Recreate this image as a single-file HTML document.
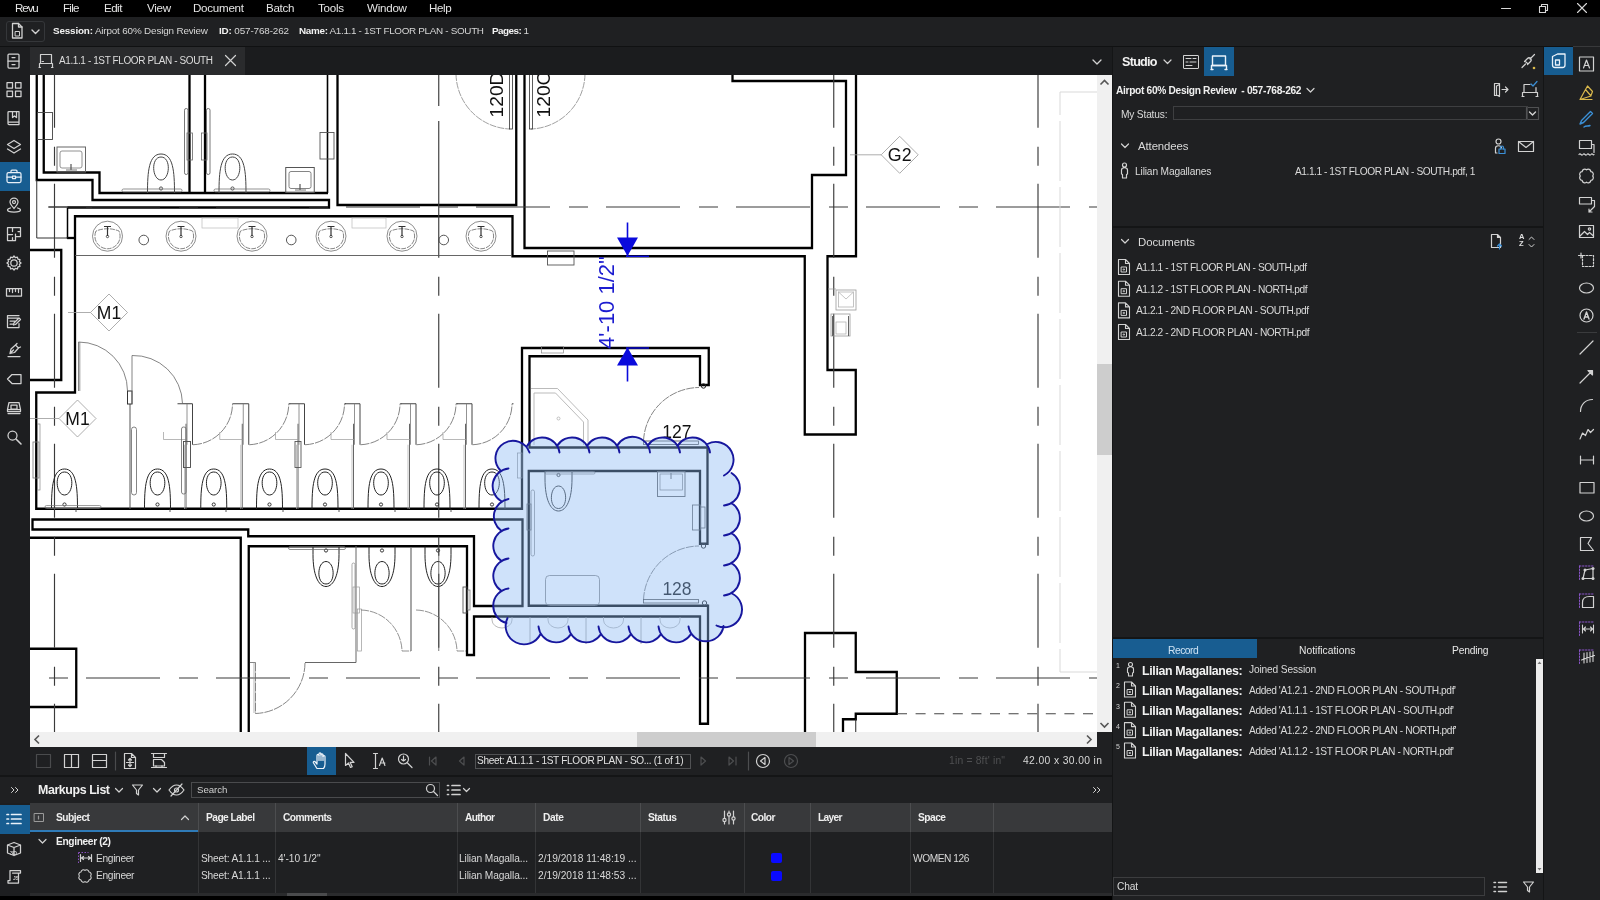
<!DOCTYPE html>
<html lang="en"><head><meta charset="utf-8"><title>Revu - A1.1.1 - 1ST FLOOR PLAN - SOUTH</title>
<style>
*{box-sizing:border-box;margin:0;padding:0}
html,body{width:1600px;height:900px;overflow:hidden;background:#1f2022;font-family:"Liberation Sans",sans-serif;color:#dcdcdc}
.a{position:absolute}
.t{will-change:transform;position:absolute;white-space:nowrap;line-height:1}
b{font-weight:bold;color:#f2f2f2}
#menubar{left:0;top:0;width:1600px;height:17px;background:#000}
#menubar .t{top:2px;font-size:11.6px;color:#e4e4e4}
#sessbar{left:0;top:17px;width:1600px;height:30px;background:#1f2022;border-bottom:1px solid #101112}
#sessbar .t{top:9px;font-size:9.9px;color:#d6d6d6}
#tabbar{left:0;top:47px;width:1112px;height:28px;background:#1b1c1e}
#tab{left:30px;top:0;width:215px;height:28px;background:#2a2b2d}
#sidebar{left:0;top:47px;width:30px;height:853px;background:#1d1e20}
#canvas{left:30px;top:75px;width:1067px;height:657px;background:#fff;overflow:hidden}
#vscroll{left:1097px;top:75px;width:15px;height:657px;background:#f0f0f0}
#hscroll{left:30px;top:732px;width:1067px;height:15px;background:#f0f0f0}
#btool{left:30px;top:747px;width:1082px;height:28px;background:#1f2022}
#mlhead{left:0;top:776px;width:1112px;height:27px;background:#1f2022}
#thead{left:30px;top:803px;width:1082px;height:29px;background:#38393b}
#thead .t{top:10px;font-size:10.2px;font-weight:bold;color:#eee}
#tbody{left:30px;top:832px;width:1082px;height:62px;background:#1f2022}
#tbody .t{font-size:10.2px;color:#d8d8d8}
#rpanel{left:1112px;top:47px;width:431px;height:853px;background:#1f2022;border-left:1px solid #141516}
#rtool{left:1543px;top:47px;width:57px;height:853px;background:#1f2022;border-left:1px solid #141516}
#rpanel .t{font-size:10.2px;color:#dadada}
svg{position:absolute;overflow:visible}
#canvas svg{will-change:transform}
.ic{stroke:#d2d2d2;fill:none;stroke-width:1.3;stroke-linecap:round;stroke-linejoin:round}
.rn{left:28.500px;font-size:12.400px!important;font-weight:bold;color:#f2f2f2!important}.rm{left:136px}
</style></head><body>
<!-- MENU BAR -->
<div id="menubar" class="a">
<span class="t" style="left:15px;letter-spacing:-1.093px">Revu</span><span class="t" style="left:63px;letter-spacing:-0.763px">File</span><span class="t" style="left:104px;letter-spacing:-0.528px">Edit</span><span class="t" style="left:147px;letter-spacing:-0.307px">View</span><span class="t" style="left:193px;letter-spacing:-0.263px">Document</span><span class="t" style="left:266px;letter-spacing:-0.314px">Batch</span><span class="t" style="left:318px;letter-spacing:-0.270px">Tools</span><span class="t" style="left:367px;letter-spacing:-0.250px">Window</span><span class="t" style="left:429px;letter-spacing:-0.420px">Help</span>
<svg style="left:1495px;top:0" width="105" height="17"><g class="ic" style="stroke:#d8d8d8;stroke-width:1.1"><path d="M6.5 8.5H15.5"/><path d="M44.5 6.5h6v6h-6z M46.5 6.5v-2h6v6h-2"/><path d="M82.5 3.5l9 9M91.5 3.5l-9 9"/></g></svg>
</div>
<!-- SESSION BAR -->
<div id="sessbar" class="a">
<div class="a" style="left:6px;top:4px;width:39px;height:21px;border:1px solid #35373a;border-radius:3px"></div>
<svg style="left:10px;top:5px" width="32" height="20"><g class="ic"><path d="M2.5 1.5h6l3.5 3.5v11h-9.5z"/><path d="M8.500 1.5v3.5h3.5"/><rect x="5.5" y="9.500" width="4" height="4.5" style="stroke-width:1"/><path d="M22 8l3.5 3.5L29 8" style="stroke-width:1.4"/></g></svg>
<span class="t" style="left:53px;letter-spacing:-0.165px"><b>Session:</b> Airpot 60% Design Review</span>
<span class="t" style="left:219.400px;letter-spacing:-0.137px"><b>ID:</b> 057-768-262</span>
<span class="t" style="left:298.600px;letter-spacing:-0.314px"><b>Name:</b> A1.1.1 - 1ST FLOOR PLAN - SOUTH</span>
<span class="t" style="left:492px;letter-spacing:-0.520px"><b>Pages:</b> 1</span>
</div>
<!-- TAB BAR -->
<div id="tabbar" class="a">
<div id="tab" class="a">
<svg style="left:8px;top:6px" width="16" height="16"><g class="ic" style="stroke-width:1.2"><path d="M2.5 1.5h11v9h-11z"/><path d="M1.5 14.500v-4h13v4M1 14.5h1.500M13.500 14.5h1.5"/><path d="M4 8.5h1.500" style="stroke-width:1"/></g></svg>
<span class="t" style="left:29px;top:9px;font-size:10px;color:#dcdcdc;letter-spacing:-0.399px">A1.1.1 - 1ST FLOOR PLAN - SOUTH</span>
<svg style="left:194px;top:7px" width="13" height="13"><path class="ic" d="M1.5 1.500l10 10M11.5 1.500l-10 10" style="stroke-width:1.2"/></svg>
</div>
<svg style="left:1091px;top:10px" width="12" height="10"><path class="ic" d="M2 3l4 4l4-4"/></svg>
</div>
<!-- LEFT SIDEBAR -->
<div id="sidebar" class="a">
<div class="a" style="left:0;top:115px;width:30px;height:29px;background:#175d91"></div>
<div class="a" style="left:0;top:758px;width:30px;height:29px;background:#175d91"></div>
<svg style="left:-.700px;top:0" width="30" height="853"><g class="ic" style="stroke-width:1.25">
<!-- file cabinet y=61 -->
<g transform="translate(7,6)"><rect x="2" y="1" width="11" height="14" rx="1"/><path d="M2 8h11M6 4.500h3M6 11.500h3"/></g>
<!-- grid y=89 -->
<g transform="translate(7,34)"><rect x="1" y="1.500" width="5.500" height="5.500"/><rect x="9.500" y="1.500" width="5.500" height="5.500"/><rect x="1" y="10" width="5.500" height="5.500"/><rect x="9.500" y="10" width="5.500" height="5.500"/></g>
<!-- bookmark y=118 -->
<g transform="translate(7,63)"><path d="M3 1.500h10v13h-10a1 1 0 0 1-1-1v-11a1 1 0 0 1 1-1zM2 12h11M6.500 1.500v6l2-1.500l2 1.500v-6"/></g>
<!-- layers y=147 -->
<g transform="translate(7,92)"><path d="M8 1.500l6.500 4l-6.500 4l-6.500-4zM1.500 10l6.500 4l6.500-4"/></g>
<!-- toolbox y=176 -->
<g transform="translate(7,121)" style="stroke:#e8f0f8"><rect x="1" y="4.500" width="14" height="10" rx="1.500"/><path d="M5 4.500v-1.500a1 1 0 0 1 1-1h4a1 1 0 0 1 1 1v1.500M1 9h5.500M9.500 9h5.500M6.500 8h3v2.500h-3z"/></g>
<!-- pin y=205 -->
<g transform="translate(7,150)"><path d="M8 11.500c-2.500-3-4-4.500-4-6.500a4 4 0 0 1 8 0c0 2-1.500 3.500-4 6.500z"/><circle cx="8" cy="5" r="1.500"/><path d="M4.500 11c-2 .5-3 1.200-3 2c0 1.200 3 2 6.500 2s6.500-.8 6.500-2c0-.8-1-1.500-3-2"/></g>
<!-- floor plan y=234 -->
<g transform="translate(7,179)"><path d="M1.500 1.500h13v9h-5v4h-8zM6.500 1.500v4M1.500 8.500h5M9.500 10.500v-2.500M12 5.500h2.500M6.500 14.500v-3"/></g>
<!-- gear y=263 -->
<g transform="translate(7,208)"><circle cx="8" cy="8" r="3.200"/><path d="M8 1l1.300 1.700l2.100-.6l.5 2.100l2.100.5l-.6 2.100l1.700 1.200l-1.700 1.300l.6 2.100l-2.100.5l-.5 2.100l-2.100-.6l-1.300 1.700l-1.300-1.700l-2.100.6l-.5-2.100l-2.100-.5l.6-2.100l-1.700-1.300l1.700-1.200l-.6-2.100l2.100-.5l.5-2.100l2.100.6z"/></g>
<!-- ruler y=292 -->
<g transform="translate(7,237)"><rect x=".500" y="4.500" width="15" height="7.500"/><path d="M3.500 4.500v3M6.500 4.500v4M9.500 4.500v3M12.500 4.500v4"/></g>
<!-- form/edit y=321 -->
<g transform="translate(7,266)"><path d="M13 2.500h-11.500v12h11.500v-4M1.500 5h11.500M4 8h5M4 11h3M14.500 6.500l-5 5l-2 .5l.5-2l5-5z"/></g>
<!-- pen sign y=350 -->
<g transform="translate(7,295)"><path d="M2 14.500h12M4 11.500l1-4.500l4.500-4l3 3l-4 4.500zM9.500 3l1.500-1.500M12.500 6l2-1M4 11.500l3.500-3.500"/></g>
<!-- tag y=379 -->
<g transform="translate(7,324)"><path d="M1.500 8l4.500-4.500h9v9h-9z"/></g>
<!-- scanner y=408 -->
<g transform="translate(7,353)"><path d="M3 2.500h10l1.500 7h-13zM1.500 9.500h13v2h-13zM2 13.500h12M5 5h6v4h-6z" /></g>
<!-- search y=437 -->
<g transform="translate(7,382)"><circle cx="6.500" cy="6.500" r="4.500"/><path d="M10 10l5 5" style="stroke-width:1.6"/></g>
<!-- >> y=790 -->
<g transform="translate(7,735)" style="stroke-width:1"><path d="M4.500 5.500l2.500 2.500l-2.500 2.500M8.500 5.500l2.500 2.500l-2.500 2.500"/></g>
<!-- list y=819 -->
<g transform="translate(7,764)" style="stroke:#eaf2fa;stroke-width:1.7"><path d="M5.500 3.500h9.500M5.500 8h9.500M5.500 12.500h9.500M1 3.500h1.500M1 8h1.500M1 12.500h1.500"/></g>
<!-- 3d y=849 -->
<g transform="translate(7,794)"><path d="M8 1.500l6.500 2.500v8l-6.500 2.500l-6.500-2.500v-8zM1.500 4l6.500 2.500l6.500-2.500M8 6.500v8"/></g>
<!-- js scroll y=877 -->
<g transform="translate(7,822)"><path d="M4 1.500h10.500v2.500h-2v10h-10.500v-2.500h2zM12.500 4h-6"/></g>
</g></svg>
<span class="t" style="left:10px;top:803.500px;font-size:5.5px;font-weight:bold;color:#cfcfcf">3D</span>
<span class="t" style="left:12.500px;top:829px;font-size:5px;font-weight:bold;color:#cfcfcf">JS</span>
</div>
<!-- CANVAS -->
<div id="canvas" class="a"><svg style="left:-30px;top:-75px" width="1600" height="900" viewBox="0 0 1600 900" font-family="Liberation Sans, sans-serif">
<path d="M43.75 70 L43.75 172.5 L99.5 172.5 L99.5 193 L328 193" fill="none" stroke="#000" stroke-width="2.3" stroke-linejoin="miter" />
<line x1="189.5" y1="70" x2="189.5" y2="193" stroke="#000" stroke-width="2.3" />
<line x1="205" y1="70" x2="205" y2="193" stroke="#000" stroke-width="2.3" />
<line x1="327.5" y1="70" x2="327.5" y2="193" stroke="#000" stroke-width="1.6" />
<path d="M36.75 70 L36.75 180 L92.5 180 L92.5 200 L329 200 L329 207.5 L67.5 207.5" fill="none" stroke="#000" stroke-width="2.3" stroke-linejoin="miter" />
<line x1="67.5" y1="207.5" x2="67.5" y2="238" stroke="#000" stroke-width="1.5" />
<line x1="66.8" y1="238" x2="75" y2="238" stroke="#000" stroke-width="2.3" />
<path d="M337.5 70 L337.5 205 L516.25 205 L516.25 70" fill="none" stroke="#000" stroke-width="2.3" stroke-linejoin="miter" />
<path d="M524.5 70 L524.5 248 L812 248 L812 175 L846 175 L846 81 L732.5 81 L732.5 70" fill="none" stroke="#000" stroke-width="2.3" stroke-linejoin="miter" />
<path d="M522 508.75 L36.25 508.75 L36.25 392.5 L75 392.5 L75 216.25 L512.5 216.25 L512.5 256.25 L804.75 256.25 L804.75 434.5 L855.75 434.5 L855.75 370 L827.5 370 L827.5 256.25 L856 256.25 L856 70" fill="none" stroke="#000" stroke-width="2.3" stroke-linejoin="miter" />
<path d="M522 509.9 L522 348 L708.75 348 L708.75 385 L700 385 L700 356.25 L529.5 356.25 L529.5 447.5 L707.5 447.5 L707.5 543.75 L700 543.75 L700 471 L528.75 471 L528.75 605.75 L708 605.75" fill="none" stroke="#000" stroke-width="2.3" stroke-linejoin="miter" />
<path d="M32.5 519.5 L522.5 519.5 L522.5 606 L474 606 L474 536.25 L248.25 536.25 L248.25 529.5 L32.5 529.5 Z" fill="none" stroke="#000" stroke-width="2.3" stroke-linejoin="miter" />
<path d="M28 537.75 L240.75 537.75 L240.75 735" fill="none" stroke="#000" stroke-width="2.3" stroke-linejoin="miter" />
<path d="M248.75 735 L248.75 546.25 L467 546.25 L467 655 L474 655 L474 616.5 L700 616.5 L700 723.75 L708 723.75 L708 604.6" fill="none" stroke="#000" stroke-width="2.3" stroke-linejoin="miter" />
<path d="M28 648.75 L76.25 648.75 L76.25 707 L28 707" fill="none" stroke="#000" stroke-width="2.3" stroke-linejoin="miter" />
<path d="M28 380 L61.25 380 L61.25 250 L28 250" fill="none" stroke="#000" stroke-width="2.3" stroke-linejoin="miter" />
<path d="M805 735 L805 633 L855.75 633 L855.75 672 L896.75 672 L896.75 713.75 L855.75 713.75 L855.75 719.25 L843 719.25 L843 735" fill="none" stroke="#000" stroke-width="2.3" stroke-linejoin="miter" />
<line x1="855.75" y1="719" x2="855.75" y2="735" stroke="#222" stroke-width="1" />
<path d="M36.75 180 L36.75 238 L67.5 238" fill="none" stroke="#333" stroke-width="1" stroke-linejoin="miter" />
<line x1="48" y1="207" x2="92" y2="207" stroke="#333" stroke-width="1" />
<line x1="-44" y1="207" x2="1097" y2="207" stroke="#3a3a3a" stroke-width="1.15" stroke-dasharray="74 19 19 18"/>
<line x1="-44" y1="678" x2="1097" y2="678" stroke="#3a3a3a" stroke-width="1.15" stroke-dasharray="74 19 19 18"/>
<line x1="54.5" y1="-76.25" x2="54.5" y2="735" stroke="#3a3a3a" stroke-width="1.15" stroke-dasharray="74 19 19 18"/>
<line x1="833.75" y1="-76.25" x2="833.75" y2="735" stroke="#3a3a3a" stroke-width="1.15" stroke-dasharray="74 19 19 18"/>
<line x1="1038" y1="-76.25" x2="1038" y2="735" stroke="#3a3a3a" stroke-width="1.15" stroke-dasharray="74 19 19 18"/>
<line x1="438.75" y1="70" x2="438.75" y2="106" stroke="#3a3a3a" stroke-width="1.15" />
<line x1="438.75" y1="121" x2="438.75" y2="257.75" stroke="#3a3a3a" stroke-width="1.15" />
<line x1="438.75" y1="276.75" x2="438.75" y2="735" stroke="#3a3a3a" stroke-width="1.15" stroke-dasharray="19 18 74 19"/>
<line x1="897" y1="713.75" x2="1097" y2="713.75" stroke="#444" stroke-width="1" stroke-dasharray="10 8.6"/>
<path d="M1097 92 L1060 92 L1060 672 L1097 672" fill="none" stroke="#d9d9d9" stroke-width="1" stroke-linejoin="miter" stroke-dasharray="60 6"/>
<path d="M881.2 154.8 L899.7 136.3 L918.2 154.8 L899.7 173.3 Z" fill="#fff" stroke="#999" stroke-width="0.8"/>
<line x1="850" y1="154.8" x2="881.2" y2="154.8" stroke="#999" stroke-width="0.8" />
<text x="899.7" y="161.10000000000002" text-anchor="middle" font-size="17.8" fill="#111">G2</text>
<path d="M90.5 312.5 L109 294.0 L127.5 312.5 L109 331.0 Z" fill="#fff" stroke="#999" stroke-width="0.8"/>
<line x1="68" y1="312.5" x2="90.5" y2="312.5" stroke="#999" stroke-width="0.8" />
<text x="109" y="318.8" text-anchor="middle" font-size="17.5" fill="#111">M1</text>
<path d="M59.0 418.5 L77.5 400.0 L96.0 418.5 L77.5 437.0 Z" fill="#fff" stroke="#999" stroke-width="0.8"/>
<line x1="30" y1="418.5" x2="59" y2="418.5" stroke="#999" stroke-width="0.8" />
<text x="77.5" y="424.8" text-anchor="middle" font-size="17.5" fill="#111">M1</text>
<circle cx="107.5" cy="236.2" r="15" fill="none" stroke="#707070" stroke-width="0.8"/>
<path d="M96.0 231 A12.6 12.6 0 1 0 119.0 231 Q107.5 226.5 96.0 231Z" fill="none" stroke="#666" stroke-width="0.8" stroke-dasharray="5 1"/>
<line x1="107.5" y1="226" x2="107.5" y2="236" stroke="#333" stroke-width="1.2" />
<line x1="104" y1="226.5" x2="111" y2="226.5" stroke="#333" stroke-width="1" />
<circle cx="107.5" cy="236.5" r="1.2" fill="none" stroke="#333" stroke-width="0.8"/>
<circle cx="181" cy="236.2" r="15" fill="none" stroke="#707070" stroke-width="0.8"/>
<path d="M169.5 231 A12.6 12.6 0 1 0 192.5 231 Q181 226.5 169.5 231Z" fill="none" stroke="#666" stroke-width="0.8" stroke-dasharray="5 1"/>
<line x1="181" y1="226" x2="181" y2="236" stroke="#333" stroke-width="1.2" />
<line x1="177.5" y1="226.5" x2="184.5" y2="226.5" stroke="#333" stroke-width="1" />
<circle cx="181" cy="236.5" r="1.2" fill="none" stroke="#333" stroke-width="0.8"/>
<circle cx="252" cy="236.2" r="15" fill="none" stroke="#707070" stroke-width="0.8"/>
<path d="M240.5 231 A12.6 12.6 0 1 0 263.5 231 Q252 226.5 240.5 231Z" fill="none" stroke="#666" stroke-width="0.8" stroke-dasharray="5 1"/>
<line x1="252" y1="226" x2="252" y2="236" stroke="#333" stroke-width="1.2" />
<line x1="248.5" y1="226.5" x2="255.5" y2="226.5" stroke="#333" stroke-width="1" />
<circle cx="252" cy="236.5" r="1.2" fill="none" stroke="#333" stroke-width="0.8"/>
<circle cx="331" cy="236.2" r="15" fill="none" stroke="#707070" stroke-width="0.8"/>
<path d="M319.5 231 A12.6 12.6 0 1 0 342.5 231 Q331 226.5 319.5 231Z" fill="none" stroke="#666" stroke-width="0.8" stroke-dasharray="5 1"/>
<line x1="331" y1="226" x2="331" y2="236" stroke="#333" stroke-width="1.2" />
<line x1="327.5" y1="226.5" x2="334.5" y2="226.5" stroke="#333" stroke-width="1" />
<circle cx="331" cy="236.5" r="1.2" fill="none" stroke="#333" stroke-width="0.8"/>
<circle cx="402" cy="236.2" r="15" fill="none" stroke="#707070" stroke-width="0.8"/>
<path d="M390.5 231 A12.6 12.6 0 1 0 413.5 231 Q402 226.5 390.5 231Z" fill="none" stroke="#666" stroke-width="0.8" stroke-dasharray="5 1"/>
<line x1="402" y1="226" x2="402" y2="236" stroke="#333" stroke-width="1.2" />
<line x1="398.5" y1="226.5" x2="405.5" y2="226.5" stroke="#333" stroke-width="1" />
<circle cx="402" cy="236.5" r="1.2" fill="none" stroke="#333" stroke-width="0.8"/>
<circle cx="481" cy="236.2" r="15" fill="none" stroke="#707070" stroke-width="0.8"/>
<path d="M469.5 231 A12.6 12.6 0 1 0 492.5 231 Q481 226.5 469.5 231Z" fill="none" stroke="#666" stroke-width="0.8" stroke-dasharray="5 1"/>
<line x1="481" y1="226" x2="481" y2="236" stroke="#333" stroke-width="1.2" />
<line x1="477.5" y1="226.5" x2="484.5" y2="226.5" stroke="#333" stroke-width="1" />
<circle cx="481" cy="236.5" r="1.2" fill="none" stroke="#333" stroke-width="0.8"/>
<circle cx="143.75" cy="240" r="4.8" fill="none" stroke="#444" stroke-width="0.9"/>
<circle cx="291.25" cy="240" r="4.8" fill="none" stroke="#444" stroke-width="0.9"/>
<circle cx="443.75" cy="240" r="4.8" fill="none" stroke="#444" stroke-width="0.9"/>
<line x1="75" y1="255.5" x2="512" y2="255.5" stroke="#555" stroke-width="0.9" />
<rect x="202" y="218" width="36" height="10" rx="0" fill="none" stroke="#bbb" stroke-width="0.7"/>
<rect x="352" y="218" width="34" height="10" rx="0" fill="none" stroke="#bbb" stroke-width="0.7"/>
<rect x="547.5" y="251" width="26.5" height="14" rx="0" fill="none" stroke="#555" stroke-width="0.9"/>
<path d="M51.5 509 C51.5 487.0 52.8 469 64.5 469 C76.2 469 77.5 487.0 77.5 509" fill="none" stroke="#222" stroke-width="1"/>
<path d="M64.5 472 C75.0 472 73.5 495 64.5 495 C55.5 495 54.0 472 64.5 472 Z" fill="none" stroke="#222" stroke-width="1"/>
<circle cx="64.5" cy="504.5" r="1.6" fill="none" stroke="#222" stroke-width="0.9"/>
<path d="M144.5 509 C144.5 487.0 145.8 469 157.5 469 C169.2 469 170.5 487.0 170.5 509" fill="none" stroke="#222" stroke-width="1"/>
<path d="M157.5 472 C168.0 472 166.5 495 157.5 495 C148.5 495 147.0 472 157.5 472 Z" fill="none" stroke="#222" stroke-width="1"/>
<circle cx="157.5" cy="504.5" r="1.6" fill="none" stroke="#222" stroke-width="0.9"/>
<path d="M200.75 509 C200.75 487.0 202.05 469 213.75 469 C225.45 469 226.75 487.0 226.75 509" fill="none" stroke="#222" stroke-width="1"/>
<path d="M213.75 472 C224.25 472 222.75 495 213.75 495 C204.75 495 203.25 472 213.75 472 Z" fill="none" stroke="#222" stroke-width="1"/>
<circle cx="213.75" cy="504.5" r="1.6" fill="none" stroke="#222" stroke-width="0.9"/>
<path d="M256.5 509 C256.5 487.0 257.8 469 269.5 469 C281.2 469 282.5 487.0 282.5 509" fill="none" stroke="#222" stroke-width="1"/>
<path d="M269.5 472 C280.0 472 278.5 495 269.5 495 C260.5 495 259.0 472 269.5 472 Z" fill="none" stroke="#222" stroke-width="1"/>
<circle cx="269.5" cy="504.5" r="1.6" fill="none" stroke="#222" stroke-width="0.9"/>
<path d="M312.0 509 C312.0 487.0 313.3 469 325 469 C336.7 469 338.0 487.0 338.0 509" fill="none" stroke="#222" stroke-width="1"/>
<path d="M325 472 C335.5 472 334 495 325 495 C316 495 314.5 472 325 472 Z" fill="none" stroke="#222" stroke-width="1"/>
<circle cx="325" cy="504.5" r="1.6" fill="none" stroke="#222" stroke-width="0.9"/>
<path d="M368.0 509 C368.0 487.0 369.3 469 381 469 C392.7 469 394.0 487.0 394.0 509" fill="none" stroke="#222" stroke-width="1"/>
<path d="M381 472 C391.5 472 390 495 381 495 C372 495 370.5 472 381 472 Z" fill="none" stroke="#222" stroke-width="1"/>
<circle cx="381" cy="504.5" r="1.6" fill="none" stroke="#222" stroke-width="0.9"/>
<path d="M424.0 509 C424.0 487.0 425.3 469 437 469 C448.7 469 450.0 487.0 450.0 509" fill="none" stroke="#222" stroke-width="1"/>
<path d="M437 472 C447.5 472 446 495 437 495 C428 495 426.5 472 437 472 Z" fill="none" stroke="#222" stroke-width="1"/>
<circle cx="437" cy="504.5" r="1.6" fill="none" stroke="#222" stroke-width="0.9"/>
<path d="M479.0 509 C479.0 487.0 480.3 469 492 469 C503.7 469 505.0 487.0 505.0 509" fill="none" stroke="#222" stroke-width="1"/>
<path d="M492 472 C502.5 472 501 495 492 495 C483 495 481.5 472 492 472 Z" fill="none" stroke="#222" stroke-width="1"/>
<circle cx="492" cy="504.5" r="1.6" fill="none" stroke="#222" stroke-width="0.9"/>
<path d="M147.5 193 C147.5 171.55 148.85 154 161 154 C173.15 154 174.5 171.55 174.5 193" fill="none" stroke="#444" stroke-width="1"/>
<path d="M161 157 C171.5 157 170 180 161 180 C152 180 150.5 157 161 157 Z" fill="none" stroke="#444" stroke-width="1"/>
<circle cx="161" cy="188.5" r="1.6" fill="none" stroke="#444" stroke-width="0.9"/>
<path d="M219.0 193 C219.0 171.55 220.35 154 232.5 154 C244.65 154 246.0 171.55 246.0 193" fill="none" stroke="#444" stroke-width="1"/>
<path d="M232.5 157 C243.0 157 241.5 180 232.5 180 C223.5 180 222.0 157 232.5 157 Z" fill="none" stroke="#444" stroke-width="1"/>
<circle cx="232.5" cy="188.5" r="1.6" fill="none" stroke="#444" stroke-width="0.9"/>
<path d="M313.0 546.5 L313.0 554.5 C313.0 574.5 318.2 586.5 326 586.5 C333.8 586.5 339.0 574.5 339.0 554.5 L339.0 546.5" fill="none" stroke="#222" stroke-width="1"/>
<path d="M326 584.0 C336 584.0 335 561.5 326 561.5 C317 561.5 316 584.0 326 584.0 Z" fill="none" stroke="#222" stroke-width="1"/>
<circle cx="326" cy="550.5" r="1.6" fill="none" stroke="#222" stroke-width="0.9"/>
<path d="M369.0 546.5 L369.0 554.5 C369.0 574.5 374.2 586.5 382 586.5 C389.8 586.5 395.0 574.5 395.0 554.5 L395.0 546.5" fill="none" stroke="#222" stroke-width="1"/>
<path d="M382 584.0 C392 584.0 391 561.5 382 561.5 C373 561.5 372 584.0 382 584.0 Z" fill="none" stroke="#222" stroke-width="1"/>
<circle cx="382" cy="550.5" r="1.6" fill="none" stroke="#222" stroke-width="0.9"/>
<path d="M425.0 546.5 L425.0 554.5 C425.0 574.5 430.2 586.5 438 586.5 C445.8 586.5 451.0 574.5 451.0 554.5 L451.0 546.5" fill="none" stroke="#222" stroke-width="1"/>
<path d="M438 584.0 C448 584.0 447 561.5 438 561.5 C429 561.5 428 584.0 438 584.0 Z" fill="none" stroke="#222" stroke-width="1"/>
<circle cx="438" cy="550.5" r="1.6" fill="none" stroke="#222" stroke-width="0.9"/>
<path d="M545.0 471 L545.0 479 C545.0 499.0 550.4 511 558.5 511 C566.6 511 572.0 499.0 572.0 479 L572.0 471" fill="none" stroke="#333" stroke-width="1"/>
<path d="M558.5 508.5 C568.5 508.5 567.5 486 558.5 486 C549.5 486 548.5 508.5 558.5 508.5 Z" fill="none" stroke="#333" stroke-width="1"/>
<circle cx="558.5" cy="475" r="1.6" fill="none" stroke="#333" stroke-width="0.9"/>
<path d="M177.5 403.75 L192.5 403.75 L192.5 444.75" fill="none" stroke="#444" stroke-width="1" stroke-linejoin="miter" />
<line x1="187" y1="403.75" x2="187" y2="444.75" stroke="#777" stroke-width="0.8" />
<path d="M193.0 444.75 A41 41 0 0 0 232.5 403.75" fill="none" stroke="#666" stroke-width="0.8" stroke-dasharray="9 1.2"/>
<line x1="232.5" y1="403.75" x2="234" y2="403.75" stroke="#444" stroke-width="0.9" />
<line x1="186" y1="423.75" x2="186" y2="509" stroke="#666" stroke-width="1" />
<line x1="184.5" y1="444.75" x2="184.5" y2="509" stroke="#aaa" stroke-width="0.7" />
<path d="M163.5 432 L163.5 439.5 L186.5 439.5" fill="none" stroke="#999" stroke-width="0.7" stroke-linejoin="miter" />
<path d="M233.75 403.75 L248.75 403.75 L248.75 444.75" fill="none" stroke="#444" stroke-width="1" stroke-linejoin="miter" />
<line x1="243.25" y1="403.75" x2="243.25" y2="444.75" stroke="#777" stroke-width="0.8" />
<path d="M249.25 444.75 A41 41 0 0 0 288.75 403.75" fill="none" stroke="#666" stroke-width="0.8" stroke-dasharray="9 1.2"/>
<line x1="288.75" y1="403.75" x2="290.25" y2="403.75" stroke="#444" stroke-width="0.9" />
<line x1="242.25" y1="423.75" x2="242.25" y2="509" stroke="#666" stroke-width="1" />
<line x1="240.75" y1="444.75" x2="240.75" y2="509" stroke="#aaa" stroke-width="0.7" />
<path d="M219.75 432 L219.75 439.5 L242.75 439.5" fill="none" stroke="#999" stroke-width="0.7" stroke-linejoin="miter" />
<path d="M289.5 403.75 L304.5 403.75 L304.5 444.75" fill="none" stroke="#444" stroke-width="1" stroke-linejoin="miter" />
<line x1="299" y1="403.75" x2="299" y2="444.75" stroke="#777" stroke-width="0.8" />
<path d="M305.0 444.75 A41 41 0 0 0 344.5 403.75" fill="none" stroke="#666" stroke-width="0.8" stroke-dasharray="9 1.2"/>
<line x1="344.5" y1="403.75" x2="346" y2="403.75" stroke="#444" stroke-width="0.9" />
<line x1="298" y1="423.75" x2="298" y2="509" stroke="#666" stroke-width="1" />
<line x1="296.5" y1="444.75" x2="296.5" y2="509" stroke="#aaa" stroke-width="0.7" />
<path d="M275.5 432 L275.5 439.5 L298.5 439.5" fill="none" stroke="#999" stroke-width="0.7" stroke-linejoin="miter" />
<path d="M345 403.75 L360 403.75 L360 444.75" fill="none" stroke="#444" stroke-width="1" stroke-linejoin="miter" />
<line x1="354.5" y1="403.75" x2="354.5" y2="444.75" stroke="#777" stroke-width="0.8" />
<path d="M360.5 444.75 A41 41 0 0 0 400 403.75" fill="none" stroke="#666" stroke-width="0.8" stroke-dasharray="9 1.2"/>
<line x1="400" y1="403.75" x2="401.5" y2="403.75" stroke="#444" stroke-width="0.9" />
<line x1="353.5" y1="423.75" x2="353.5" y2="509" stroke="#666" stroke-width="1" />
<line x1="352" y1="444.75" x2="352" y2="509" stroke="#aaa" stroke-width="0.7" />
<path d="M331 432 L331 439.5 L354 439.5" fill="none" stroke="#999" stroke-width="0.7" stroke-linejoin="miter" />
<path d="M401 403.75 L416 403.75 L416 444.75" fill="none" stroke="#444" stroke-width="1" stroke-linejoin="miter" />
<line x1="410.5" y1="403.75" x2="410.5" y2="444.75" stroke="#777" stroke-width="0.8" />
<path d="M416.5 444.75 A41 41 0 0 0 456 403.75" fill="none" stroke="#666" stroke-width="0.8" stroke-dasharray="9 1.2"/>
<line x1="456" y1="403.75" x2="457.5" y2="403.75" stroke="#444" stroke-width="0.9" />
<line x1="409.5" y1="423.75" x2="409.5" y2="509" stroke="#666" stroke-width="1" />
<line x1="408" y1="444.75" x2="408" y2="509" stroke="#aaa" stroke-width="0.7" />
<path d="M387 432 L387 439.5 L410 439.5" fill="none" stroke="#999" stroke-width="0.7" stroke-linejoin="miter" />
<path d="M457 403.75 L472 403.75 L472 444.75" fill="none" stroke="#444" stroke-width="1" stroke-linejoin="miter" />
<line x1="466.5" y1="403.75" x2="466.5" y2="444.75" stroke="#777" stroke-width="0.8" />
<path d="M472.5 444.75 A41 41 0 0 0 512 403.75" fill="none" stroke="#666" stroke-width="0.8" stroke-dasharray="9 1.2"/>
<line x1="512" y1="403.75" x2="513.5" y2="403.75" stroke="#444" stroke-width="0.9" />
<line x1="465.5" y1="423.75" x2="465.5" y2="509" stroke="#666" stroke-width="1" />
<line x1="464" y1="444.75" x2="464" y2="509" stroke="#aaa" stroke-width="0.7" />
<path d="M443 432 L443 439.5 L466 439.5" fill="none" stroke="#999" stroke-width="0.7" stroke-linejoin="miter" />
<rect x="183.5" y="441.5" width="7" height="26" rx="0" fill="none" stroke="#444" stroke-width="0.9"/>
<rect x="295" y="441.5" width="6" height="26" rx="0" fill="none" stroke="#555" stroke-width="0.9"/>
<rect x="131.5" y="427" width="5" height="68" rx="2.5" fill="none" stroke="#666" stroke-width="0.8"/>
<rect x="181.5" y="427" width="4.5" height="67" rx="2" fill="none" stroke="#666" stroke-width="0.8"/>
<line x1="130" y1="404" x2="130" y2="509" stroke="#555" stroke-width="1" />
<rect x="127.5" y="391" width="4.5" height="13" rx="0" fill="none" stroke="#333" stroke-width="1"/>
<rect x="33" y="442" width="6" height="36" rx="0" fill="none" stroke="#777" stroke-width="0.8"/>
<rect x="37.5" y="424" width="2.5" height="66" rx="0" fill="none" stroke="#888" stroke-width="0.7"/>
<path d="M78.5 391 L78.5 342 A49 49 0 0 1 127.5 391" fill="none" stroke="#666" stroke-width="0.8"/>
<line x1="79.8" y1="342" x2="79.8" y2="391" stroke="#777" stroke-width="0.8" />
<path d="M132 404 L132 355.5 A49 49 0 0 1 182.5 403.5 L192 403.5" fill="none" stroke="#666" stroke-width="0.8"/>
<line x1="76" y1="509" x2="76" y2="512" stroke="#333" stroke-width="0.8" />
<line x1="170" y1="509" x2="170" y2="512" stroke="#333" stroke-width="0.8" />
<line x1="226" y1="509" x2="226" y2="512" stroke="#333" stroke-width="0.8" />
<line x1="283" y1="509" x2="283" y2="512" stroke="#333" stroke-width="0.8" />
<line x1="339" y1="509" x2="339" y2="512" stroke="#333" stroke-width="0.8" />
<line x1="395" y1="509" x2="395" y2="512" stroke="#333" stroke-width="0.8" />
<line x1="451" y1="509" x2="451" y2="512" stroke="#333" stroke-width="0.8" />
<rect x="45" y="505.5" width="56" height="3" rx="1.5" fill="none" stroke="#777" stroke-width="0.7"/>
<rect x="57" y="147" width="28.5" height="25" rx="0" fill="none" stroke="#666" stroke-width="1"/>
<rect x="60" y="151" width="22" height="17" rx="2" fill="none" stroke="#777" stroke-width="0.8"/>
<line x1="71" y1="164" x2="71" y2="170" stroke="#555" stroke-width="1.2" />
<line x1="66" y1="170" x2="77" y2="170" stroke="#666" stroke-width="0.9" />
<rect x="285.75" y="167.5" width="28.5" height="25" rx="0" fill="none" stroke="#555" stroke-width="1"/>
<rect x="289" y="171.5" width="22" height="17" rx="2" fill="none" stroke="#666" stroke-width="0.8"/>
<line x1="300" y1="184" x2="300" y2="190" stroke="#555" stroke-width="1.2" />
<line x1="295" y1="190" x2="306" y2="190" stroke="#666" stroke-width="0.9" />
<rect x="184.5" y="108.5" width="3.5" height="66" rx="1.7" fill="none" stroke="#555" stroke-width="0.8"/>
<rect x="187" y="133" width="5.5" height="27" rx="0" fill="none" stroke="#666" stroke-width="0.8"/>
<rect x="206.5" y="108.5" width="3.5" height="66" rx="1.7" fill="none" stroke="#555" stroke-width="0.8"/>
<rect x="201.5" y="133" width="5.5" height="27" rx="0" fill="none" stroke="#666" stroke-width="0.8"/>
<rect x="37.5" y="112.5" width="15" height="27" rx="0" fill="none" stroke="#444" stroke-width="0.9"/>
<rect x="320" y="132.5" width="14" height="26.5" rx="0" fill="none" stroke="#555" stroke-width="0.9"/>
<rect x="122" y="189" width="60" height="3" rx="1.5" fill="none" stroke="#666" stroke-width="0.7"/>
<rect x="214" y="189" width="56" height="3" rx="1.5" fill="none" stroke="#666" stroke-width="0.7"/>
<path d="M456 74 A56 56 0 0 0 510 129" fill="none" stroke="#888" stroke-width="0.8" stroke-dasharray="7 1"/>
<path d="M585 74 A56 56 0 0 1 531 129" fill="none" stroke="#888" stroke-width="0.8" stroke-dasharray="7 1"/>
<rect x="509.5" y="70" width="3" height="59" rx="0" fill="none" stroke="#333" stroke-width="0.8"/>
<rect x="529.5" y="70" width="3" height="59" rx="0" fill="none" stroke="#333" stroke-width="0.8"/>
<text transform="translate(502.5,94.5) rotate(-90)" text-anchor="middle" font-size="19.2" fill="#111">120D</text>
<text transform="translate(550,94.5) rotate(-90)" text-anchor="middle" font-size="19.2" fill="#111">120C</text>
<path d="M531 388.5 L557.5 388.5 L588 420 L588 445 M534 393 L555.5 393 L583.5 422 L583.5 445 M534 393 L534 445" fill="none" stroke="#aaa" stroke-width="0.8"/>
<circle cx="558.5" cy="418.5" r="1.5" fill="none" stroke="#aaa" stroke-width="0.7"/>
<rect x="541.5" y="346.5" width="22" height="6.5" rx="0" fill="none" stroke="#888" stroke-width="0.7"/>
<path d="M643.5 441 A56 56 0 0 1 699 387.5" fill="none" stroke="#666" stroke-width="0.8" stroke-dasharray="8 1"/>
<rect x="643.5" y="441" width="55" height="3.5" rx="0" fill="none" stroke="#444" stroke-width="0.8"/>
<circle cx="703.5" cy="386" r="2.2" fill="none" stroke="#222" stroke-width="1"/>
<text x="676.8" y="437.5" text-anchor="middle" font-size="17.5" fill="#111">127</text>
<rect x="657.5" y="471.5" width="27.5" height="25" rx="0" fill="none" stroke="#555" stroke-width="0.9"/>
<rect x="660" y="474" width="22.5" height="16" rx="0" fill="none" stroke="#777" stroke-width="0.7"/>
<line x1="671" y1="473" x2="671" y2="479" stroke="#666" stroke-width="1" />
<rect x="545.5" y="575.5" width="54" height="30" rx="4" fill="none" stroke="#777" stroke-width="0.8"/>
<rect x="545" y="471.5" width="50" height="2.5" rx="1.2" fill="none" stroke="#777" stroke-width="0.7"/>
<rect x="527" y="504" width="4" height="26" rx="0" fill="none" stroke="#555" stroke-width="0.8"/>
<rect x="531" y="490" width="3.5" height="66" rx="1.7" fill="none" stroke="#777" stroke-width="0.7"/>
<rect x="692.5" y="505" width="8" height="25" rx="0" fill="none" stroke="#555" stroke-width="0.8"/>
<rect x="700.5" y="507" width="4.5" height="21" rx="0" fill="none" stroke="#555" stroke-width="0.8"/>
<path d="M643.5 600 A56 56 0 0 1 699 546" fill="none" stroke="#666" stroke-width="0.8" stroke-dasharray="8 1"/>
<rect x="643.5" y="599.5" width="55" height="3.5" rx="0" fill="none" stroke="#444" stroke-width="0.8"/>
<circle cx="703.5" cy="546" r="2.2" fill="none" stroke="#222" stroke-width="1"/>
<circle cx="704.5" cy="603" r="2.2" fill="none" stroke="#222" stroke-width="1"/>
<text x="677" y="595" text-anchor="middle" font-size="17.5" fill="#111">128</text>
<rect x="517.5" y="453" width="4.5" height="25" rx="0" fill="none" stroke="#888" stroke-width="0.7"/>
<line x1="356" y1="546" x2="356" y2="662.5" stroke="#666" stroke-width="1" />
<line x1="305" y1="662.5" x2="356" y2="662.5" stroke="#666" stroke-width="1" />
<rect x="352" y="563" width="3" height="66" rx="1.5" fill="none" stroke="#888" stroke-width="0.7"/>
<rect x="353" y="587" width="6.5" height="26" rx="0" fill="none" stroke="#999" stroke-width="0.7"/>
<rect x="357.5" y="609" width="4" height="42" rx="0" fill="none" stroke="#999" stroke-width="0.7"/>
<path d="M255.5 662.5 L255.5 713.5 A51 51 0 0 0 305 662.5" fill="none" stroke="#666" stroke-width="0.8" stroke-dasharray="9 1"/>
<line x1="250" y1="662.5" x2="255.5" y2="662.5" stroke="#666" stroke-width="0.8" />
<line x1="254" y1="662.5" x2="254" y2="713" stroke="#999" stroke-width="0.7" />
<line x1="411" y1="547" x2="411" y2="651" stroke="#777" stroke-width="1.3" />
<line x1="438.75" y1="547" x2="438.75" y2="651" stroke="#555" stroke-width="0.8" />
<rect x="288.5" y="546.5" width="57" height="3" rx="1.5" fill="none" stroke="#666" stroke-width="0.7"/>
<path d="M361 610 A42 42 0 0 1 402 651 L411 651" fill="none" stroke="#777" stroke-width="0.8" stroke-dasharray="8 1"/>
<path d="M416 610 A42 42 0 0 1 457 651 L466 651" fill="none" stroke="#777" stroke-width="0.8" stroke-dasharray="8 1"/>
<rect x="463" y="587" width="4" height="26" rx="0" fill="none" stroke="#444" stroke-width="0.8"/>
<rect x="467.5" y="590" width="2.5" height="20" rx="0" fill="none" stroke="#666" stroke-width="0.7"/>
<line x1="530" y1="617" x2="530" y2="644" stroke="#999" stroke-width="0.8" />
<line x1="586" y1="617" x2="586" y2="644" stroke="#999" stroke-width="0.8" />
<line x1="641" y1="617" x2="641" y2="644" stroke="#999" stroke-width="0.8" />
<path d="M492 617 L492 620 A10 8 0 0 0 512 620 L512 617" fill="none" stroke="#aaa" stroke-width="0.8"/>
<path d="M548 617 L548 620 A10 8 0 0 0 568 620 L568 617" fill="none" stroke="#aaa" stroke-width="0.8"/>
<path d="M603.5 617 L603.5 620 A10 8 0 0 0 623.5 620 L623.5 617" fill="none" stroke="#aaa" stroke-width="0.8"/>
<path d="M660 617 L660 620 A10 8 0 0 0 680 620 L680 617" fill="none" stroke="#aaa" stroke-width="0.8"/>
<rect x="836" y="290" width="20" height="20" rx="0" fill="none" stroke="#999" stroke-width="0.8"/>
<rect x="838.5" y="292" width="15" height="15" rx="0" fill="none" stroke="#aaa" stroke-width="0.7"/>
<line x1="838.5" y1="292" x2="846" y2="299" stroke="#aaa" stroke-width="0.7" />
<line x1="853.5" y1="292" x2="846" y2="299" stroke="#aaa" stroke-width="0.7" />
<rect x="831" y="314" width="19" height="22" rx="0" fill="none" stroke="#999" stroke-width="0.8"/>
<rect x="836" y="322" width="10" height="12" rx="0" fill="none" stroke="#aaa" stroke-width="0.7"/>
<line x1="832.5" y1="316" x2="832.5" y2="336" stroke="#666" stroke-width="1" />
<line x1="848.5" y1="316" x2="848.5" y2="336" stroke="#666" stroke-width="1" />
<line x1="828" y1="289" x2="836" y2="289" stroke="#999" stroke-width="0.7" />
<line x1="627.5" y1="222.5" x2="627.5" y2="256" stroke="#0a0adc" stroke-width="1.6" />
<line x1="626" y1="256.3" x2="649" y2="256.3" stroke="#0a0adc" stroke-width="1.4" />
<path d="M617 237.5 L638 237.5 L627.5 256 Z" fill="#0a0adc"/>
<line x1="627.5" y1="348" x2="627.5" y2="381.5" stroke="#0a0adc" stroke-width="1.6" />
<line x1="626" y1="348" x2="649" y2="348" stroke="#0a0adc" stroke-width="1.4" />
<path d="M617 365.5 L638 365.5 L627.5 347.5 Z" fill="#0a0adc"/>
<text transform="translate(613.5,302.5) rotate(-90)" text-anchor="middle" font-size="22" fill="#1c1cd0">4'-10 1/2"</text>
<path d="M500 470 A17.5 17.5 0 1 1 529.5 452.5 L527 446 A17.6 17.6 0 0 1 559.5 452.5 L557 446 A17.6 17.6 0 0 1 589.5 452.5 L587 446 A17.6 17.6 0 0 1 619.5 452.5 L617 446 A17.6 17.6 0 0 1 650 452.5 L647.5 446 A17.6 17.6 0 0 1 680 452.5 L677.5 446 A17.6 17.6 0 0 1 710 452.5 L707.5 444 A17.5 17.5 0 1 1 724 475.5 L731.5 473 A17.6 17.6 0 0 1 724 505.5 L731.5 503 A17.6 17.6 0 0 1 724 535.5 L731.5 533 A17.6 17.6 0 0 1 724 565.5 L731.5 563 A17.6 17.6 0 0 1 724 595.5 L732 593.5 A17.6 17.6 0 0 1 716.5 625.5 L723.5 626 A17.7 17.7 0 0 1 688.5 626.5 L691 634 A17.6 17.6 0 0 1 658.5 626.5 L661 634 A17.6 17.6 0 0 1 628.5 626.5 L631 634 A17.6 17.6 0 0 1 598.5 626.5 L601 634 A17.6 17.6 0 0 1 568.5 626.5 L571 634 A17.6 17.6 0 0 1 538.5 626.5 L540.5 634 A17.6 17.6 0 0 1 507.5 618 L506.5 623 A17.6 17.6 0 0 1 508.5 588.5 L501 590.5 A17.6 17.6 0 0 1 508.5 558.5 L501 560.5 A17.6 17.6 0 0 1 508.5 528.5 L501 530.5 A17.6 17.6 0 0 1 508.5 499 L501 501 A17.6 17.6 0 0 1 508.5 468.5 Z" fill="rgba(140,185,242,0.42)" stroke="none"/>
<path d="M500 470 A17.5 17.5 0 1 1 529.5 452.5 M527 446 A17.6 17.6 0 0 1 559.5 452.5 M557 446 A17.6 17.6 0 0 1 589.5 452.5 M587 446 A17.6 17.6 0 0 1 619.5 452.5 M617 446 A17.6 17.6 0 0 1 650 452.5 M647.5 446 A17.6 17.6 0 0 1 680 452.5 M677.5 446 A17.6 17.6 0 0 1 710 452.5 M707.5 444 A17.5 17.5 0 1 1 724 475.5 M731.5 473 A17.6 17.6 0 0 1 724 505.5 M731.5 503 A17.6 17.6 0 0 1 724 535.5 M731.5 533 A17.6 17.6 0 0 1 724 565.5 M731.5 563 A17.6 17.6 0 0 1 724 595.5 M732 593.5 A17.6 17.6 0 0 1 716.5 625.5 M723.5 626 A17.7 17.7 0 0 1 688.5 626.5 M691 634 A17.6 17.6 0 0 1 658.5 626.5 M661 634 A17.6 17.6 0 0 1 628.5 626.5 M631 634 A17.6 17.6 0 0 1 598.5 626.5 M601 634 A17.6 17.6 0 0 1 568.5 626.5 M571 634 A17.6 17.6 0 0 1 538.5 626.5 M540.5 634 A17.6 17.6 0 0 1 507.5 618 M506.5 623 A17.6 17.6 0 0 1 508.5 588.5 M501 590.5 A17.6 17.6 0 0 1 508.5 558.5 M501 560.5 A17.6 17.6 0 0 1 508.5 528.5 M501 530.5 A17.6 17.6 0 0 1 508.5 499 M501 501 A17.6 17.6 0 0 1 508.5 468.5" fill="none" stroke="#17179e" stroke-width="1.9" stroke-linecap="round"/>
</svg></div>
<!-- SCROLLBARS -->
<div id="vscroll" class="a">
<div class="a" style="left:0;top:289px;width:15px;height:91px;background:#cdcdcd"></div>
<svg style="left:0;top:0" width="15" height="657"><g fill="none" stroke="#555" stroke-width="1.6"><path d="M3.500 9.500l4-4l4 4"/><path d="M3.500 648l4 4l4-4"/></g></svg>
</div>
<div id="hscroll" class="a">
<div class="a" style="left:607px;top:0;width:179px;height:15px;background:#cdcdcd"></div>
<svg style="left:0;top:0" width="1067" height="15"><g fill="none" stroke="#555" stroke-width="1.6"><path d="M9 3.500l-4 4l4 4"/><path d="M1057 3.500l4 4l-4 4"/></g></svg>
</div>
<div class="a" style="left:1097px;top:732px;width:15px;height:15px;background:#1f2022"></div>
<!-- BOTTOM TOOLBAR -->
<div id="btool" class="a">
<div class="a" style="left:277px;top:0;width:29px;height:28px;background:#175d91"></div>
<svg style="left:0;top:0" width="1082" height="28"><g class="ic" style="stroke-width:1.2">
<rect x="6.500" y="7.500" width="14" height="13" style="stroke:#4a4b4d"/>
<path d="M34.500 7.500h14v13h-14zM41.500 7.500v13"/>
<path d="M62.500 7.500h14v13h-14zM62.500 13.500h14"/>
<path d="M85.500 5v18" style="stroke:#4a4b4d"/>
<path d="M94.500 6.500h7l4 4v11h-11zM101.500 6.500v4h4M100 11.500v8M96.500 15.500h7M98.500 13l1.500-1.500l1.500 1.500M98.500 18l1.500 1.500l1.500-1.500"/>
<path d="M123.500 6.500v4h11v-4M121.500 6.500h15M123.500 12.500h8l3 3v3.500h-11zM121.500 20.500h15M126 20.500v-2M132 20.500v-2"/>
<!-- hand -->
<g style="stroke:#eef4fa"><path d="M287 21.500c-1-1.500-2.500-4-3.500-5.500c-.8-1.300.8-2.200 1.800-1l1.700 2v-8.500c0-1.400 2-1.400 2 0v-1.500c0-1.400 2-1.400 2 0v1c0-1.400 2-1.400 2 0v1.500c0-1.300 2-1.300 2 0v7.500c0 2-.5 3.500-1.500 4.500z"/><path d="M289 8.500v5M291 7v6.500M293 8v5.500"/></g>
<!-- pointer -->
<path d="M315.500 6.500v12l3-2.500l2 4.500l1.700-.8l-2-4.300h3.800z"/>
<!-- IA -->
<path d="M343.500 6.500h4M343.500 21.500h4M345.500 6.500v15M349.500 18.500l2.700-7.500l2.700 7.500M350.500 16h4.400"/>
<!-- zoom -->
<circle cx="373.500" cy="12" r="5"/><path d="M377.500 16l4.500 4.500M371.500 12.500l2 1.500l2-1.500M373.500 9v5"/>
</g>
<g class="ic" style="stroke:#4d4e50;stroke-width:1.2"><path d="M399.500 10v8M406 10l-4.500 4l4.500 4z"/><path d="M434 10l-4.500 4l4.500 4z"/><path d="M671 10l4.500 4l-4.500 4z"/><path d="M699 10l4.500 4l-4.500 4zM706 10v8"/><path d="M718.500 5v18"/></g>
<g class="ic" style="stroke-width:1.2"><circle cx="733" cy="14" r="6.500"/><path d="M735 10.500l-4.500 3.500l4.500 3.500z"/></g>
<g class="ic" style="stroke:#4d4e50;stroke-width:1.2"><circle cx="761" cy="14" r="6.500"/><path d="M759 10.500l4.500 3.500l-4.500 3.500z"/></g>
</svg>
<div class="a" style="left:445px;top:7px;width:216px;height:15px;border:1px solid #505153"></div>
<span class="t" style="left:447.300px;top:9px;font-size:10.1px;color:#e2e2e2;letter-spacing:-0.324px">Sheet: A1.1.1 - 1ST FLOOR PLAN - SO... (1 of 1)</span>
<span class="t" style="left:919px;top:9px;font-size:10.3px;color:#4f5052;letter-spacing:0.198px">1in = 8ft' in"</span>
<span class="t" style="left:993px;top:9px;font-size:10.3px;color:#d8d8d8;letter-spacing:0.381px">42.00 x 30.00 in</span>
</div>
<div class="a" style="left:0;top:775px;width:1112px;height:2px;background:#141516"></div>
<!-- MARKUPS LIST HEADER -->
<div id="mlhead" class="a" style="top:777px;height:26px">
<span class="t" style="left:38px;top:6.500px;font-size:12.4px;font-weight:bold;color:#f0f0f0;letter-spacing:-0.403px">Markups List</span>
<svg style="left:0;top:0" width="1112" height="26"><g class="ic" style="stroke-width:1.2">
<path d="M115.500 11.500l3.500 3.500l3.500-3.500"/>
<path d="M132.500 8h10l-4 5v5l-2-1.500v-3.500z"/>
<path d="M153.500 11.500l3.500 3.500l3.500-3.500"/>
<path d="M169 13c2.500-3.500 5-5 7.500-5s5 1.500 7.500 5c-2.500 3.500-5 5-7.500 5s-5-1.500-7.500-5zM171 19l11-12"/><circle cx="176.500" cy="13" r="2"/>
<circle cx="430.500" cy="11.500" r="4"/><path d="M433.500 14.500l4 4"/>
<path d="M452 8.500h8M452 13h8M452 17.500h8" style="stroke-width:1.7"/><path d="M447.500 8.500h1M447.500 13h1M447.500 17.500h1" style="stroke-width:1.7"/><path d="M463.500 11.500l3 3l3-3"/>
<path d="M1093.500 10.500l2.500 2.500l-2.500 2.500M1097.500 10.500l2.500 2.500l-2.500 2.500" style="stroke-width:1"/><path d="M11.500 10.500l2.500 2.500l-2.500 2.500M15.500 10.500l2.500 2.500l-2.500 2.500" style="stroke-width:1"/>
</g></svg>
<div class="a" style="left:191px;top:5px;width:249px;height:16px;border:1px solid #4a4b4d"></div>
<span class="t" style="left:197px;top:8px;font-size:9.7px;color:#d0d0d0;letter-spacing:-0.041px">Search</span>
</div>
<!-- TABLE HEADER -->
<div id="thead" class="a">
<div class="a" style="left:0;top:27px;width:169px;height:2px;background:#2f7bb8"></div>
<svg style="left:0;top:0" width="1082" height="29"><g stroke="#4c4d4f" stroke-width="1"><path d="M168.500 0v29M245.500 0v29M427.500 0v29M505.500 0v29M610.500 0v29M714.500 0v29M780.500 0v29M880.500 0v29M963.500 0v29"/></g>
<g class="ic" style="stroke-width:1.2"><rect x="4.500" y="10.500" width="9" height="8" style="stroke:#9a9a9a;stroke-width:1"/><path d="M8.500 13v3" style="stroke:#9a9a9a"/><path d="M151.500 16.500l3.500-3.500l3.500 3.500"/>
<path d="M694.500 8v13M699 8v13M703.500 8v13"/><circle cx="694.500" cy="17" r="1.600" fill="#38393b"/><circle cx="699" cy="11.500" r="1.600" fill="#38393b"/><circle cx="703.500" cy="15.500" r="1.600" fill="#38393b"/></g></svg>
<span class="t" style="left:25.500px;letter-spacing:-0.466px">Subject</span><span class="t" style="left:176px;letter-spacing:-0.533px">Page Label</span><span class="t" style="left:253px;letter-spacing:-0.522px">Comments</span><span class="t" style="left:435px;letter-spacing:-0.678px">Author</span><span class="t" style="left:513px;letter-spacing:-0.365px">Date</span><span class="t" style="left:618px;letter-spacing:-0.428px">Status</span><span class="t" style="left:721px;letter-spacing:-0.527px">Color</span><span class="t" style="left:788px;letter-spacing:-0.672px">Layer</span><span class="t" style="left:888px;letter-spacing:-0.504px">Space</span>
</div>
<!-- TABLE BODY -->
<div id="tbody" class="a">
<svg style="left:0;top:0" width="1082" height="62"><g stroke="#333436" stroke-width="1"><path d="M168.500 0v62M245.500 0v62M427.500 0v62M505.500 0v62M610.500 0v62M714.500 0v62M780.500 0v62M880.500 0v62M963.500 0v62"/></g>
<g class="ic" style="stroke-width:1.2"><path d="M9 7.500l3.500 3.500l3.500-3.500"/>
<path d="M50.500 22.500v7M61.500 22.500v7M51.500 26h9M53.500 24.500l-2 1.500l2 1.500M58.500 24.500l2 1.500l-2 1.500"/>
<path d="M55.00 38.40A2.40 2.40 0 0 1 58.96 40.04A2.40 2.40 0 0 1 60.60 44.00A2.40 2.40 0 0 1 58.96 47.96A2.40 2.40 0 0 1 55.00 49.60A2.40 2.40 0 0 1 51.04 47.96A2.40 2.40 0 0 1 49.40 44.00A2.40 2.40 0 0 1 51.04 40.04A2.40 2.40 0 0 1 55.00 38.40Z" style="stroke-width:1.100"/></g>
<path d="M48.500 20.500v11M48.500 20.500h10" fill="none" stroke="#8a4fc0" stroke-width="1" stroke-dasharray="1.500 1.500"/>
<rect x="741" y="21" width="11" height="10" rx="2" fill="#0a0aff"/><rect x="741" y="39" width="11" height="10" rx="2" fill="#0a0aff"/></svg>
<span class="t" style="left:25.500px;top:4.500px;font-weight:bold;color:#f0f0f0;letter-spacing:-0.352px">Engineer (2)</span>
<span class="t" style="left:66px;top:21.700px;letter-spacing:-0.326px">Engineer</span><span class="t" style="left:66px;top:39px;letter-spacing:-0.326px">Engineer</span>
<span class="t" style="left:170.500px;top:21.700px;letter-spacing:-0.188px">Sheet: A1.1.1 ...</span><span class="t" style="left:170.500px;top:39px;letter-spacing:-0.188px">Sheet: A1.1.1 ...</span>
<span class="t" style="left:247.500px;top:21.700px;letter-spacing:-0.050px">4'-10 1/2"</span>
<span class="t" style="left:429px;top:21.700px;letter-spacing:-0.112px">Lilian Magalla...</span><span class="t" style="left:429px;top:39px;letter-spacing:-0.112px">Lilian Magalla...</span>
<span class="t" style="left:507.500px;top:21.700px;letter-spacing:0.006px">2/19/2018 11:48:19 ...</span><span class="t" style="left:507.500px;top:39px;letter-spacing:0.006px">2/19/2018 11:48:53 ...</span>
<span class="t" style="left:882.500px;top:21.700px;letter-spacing:-0.439px">WOMEN 126</span>
</div>
<div class="a" style="left:30px;top:893px;width:1082px;height:3px;background:#2a2b2d"></div>
<div class="a" style="left:287px;top:893px;width:40px;height:3px;background:#4a4b4d"></div>
<div class="a" style="left:0;top:896px;width:1600px;height:4px;background:#000"></div>
<!-- RIGHT PANEL -->
<div id="rpanel" class="a">
<div class="a" style="left:91px;top:0;width:30px;height:29px;background:#175d91"></div>
<span class="t" style="left:8.500px;top:8.500px;font-size:12.6px;font-weight:bold;color:#f2f2f2;letter-spacing:-0.734px">Studio</span>
<svg style="left:0;top:1px" width="431" height="28"><g class="ic" style="stroke-width:1.2">
<path d="M51 12l3.500 3.500l3.500-3.500"/>
<g style="stroke-width:1"><rect x="70.500" y="7.500" width="15" height="13" rx=".500"/><path d="M73 10.500h5M80 10.500h3M73 14h2M77 14h6M73 17.500h6"/></g>
<g style="stroke:#eaf2fa;stroke-width:1.400"><path d="M99.500 8h13v9.500h-13z"/><path d="M98.500 21.500v-4h15v4M98 21.500h2M112 21.500h2"/></g>
<path d="M409 19.500l3.500-3.500M412 13l3 3l2.500-2.500a2.100 2.100 0 0 0-3-3zM417 11l4.500-4.500M413 12l-1.500 1.500M416 15l-1.500 1.500"/>
</g><circle cx="421" cy="20" r="1.300" fill="#d8b84a"/></svg>
<span class="t" style="left:3.200px;top:38.600px;font-size:10.2px;font-weight:bold;color:#f0f0f0;letter-spacing:-0.319px">Airpot 60% Design Review&nbsp; - 057-768-262</span>
<svg style="left:0;top:28px" width="431" height="200"><g class="ic" style="stroke-width:1.2">
<path d="M194 13.500l3.500 3.500l3.500-3.500"/>
<!-- exit -->
<path d="M381.500 8.500h5v12h-5zM386.500 9.500l-3 1.500v9l3 1.500M389 14.500h5.500M392.500 12l2.500 2.500l-2.500 2.500"/>
<!-- studio check -->
<path d="M411 9.500v8h12v-5M411 9.500h6M409.500 21.500v-4h15v4M409 21.500h2M423 21.500h2"/><path d="M418 9l2 2l4-4.500" style="stroke:#3b8fd6"/>
<!-- dropdown -->
<rect x="413.500" y="32.500" width="12" height="12" style="stroke:#505153"/><path d="M416.500 37l3 3l3-3" style="stroke-width:1.400"/>
<!-- attendees chevron -->
<path d="M8.500 69l3.500 3.500l3.500-3.500"/>
<!-- person lock -->
<path d="M385.500 64a2.500 2.500 0 1 1 0 5a2.500 2.500 0 1 1 0-5zM382.500 78v-5c0-3 6-3 6 0M382.500 78h1.500"/><rect x="386" y="74" width="6" height="4.500" style="stroke:#3b8fd6"/><path d="M387.500 74v-1.500a1.500 1.500 0 0 1 3 0v1.500" style="stroke:#3b8fd6"/>
<!-- mail -->
<rect x="405.500" y="66.500" width="15" height="10"/><path d="M405.500 66.500l7.500 6l7.500-6"/>
<!-- attendee person -->
<path d="M11.500 88a2 2 0 1 1 0 4a2 2 0 1 1 0-4zM8.500 99v-4c0-3 6-3 6 0v4l-1 .5v3.500h-4v-3.500z"/>
<!-- documents chevron -->
<path d="M8.500 164.500l3.500 3.500l3.500-3.500"/>
<!-- doc add -->
<path d="M378.500 159.500h6l3 3v10h-9zM384.500 159.500v3h3"/><path d="M386.500 174v-5M384.500 171l2-2l2 2" style="stroke:#3b8fd6"/>
<!-- AZ -->
<path d="M416 161.500l2.500 2.500l2.500-2.500" transform="rotate(180 418.500 163)" style="stroke-width:1"/><path d="M416 169.500l2.500 2.500l2.500-2.500" style="stroke-width:1"/>
</g></svg>
<span class="t" style="left:405.500px;top:186px;font-size:7.5px;font-weight:bold;color:#e0e0e0;line-height:7px">A<br>Z</span>
<span class="t" style="left:8px;top:63px;letter-spacing:-0.181px">My Status:</span>
<div class="a" style="left:60px;top:59px;width:355px;height:14px;border:1px solid #3e3f41"></div>
<span class="t" style="left:24.600px;top:93.500px;font-size:11.4px;letter-spacing:-0.100px">Attendees</span>
<span class="t" style="left:22.200px;top:119.500px;letter-spacing:-0.146px">Lilian Magallanes</span>
<span class="t" style="left:181.500px;top:119.500px;letter-spacing:-0.462px">A1.1.1 - 1ST FLOOR PLAN - SOUTH.pdf, 1</span>
<div class="a" style="left:0;top:179px;width:431px;height:2px;background:#141516"></div>
<span class="t" style="left:24.600px;top:190px;font-size:11.4px;letter-spacing:-0.078px">Documents</span>
<svg style="left:0;top:210.500px" width="30" height="100"><g class="ic" style="stroke-width:1.100">
<g><path d="M5.500 1.500h7l4 4v11h-11zM12.500 1.500v4h4"/><rect x="8.500" y="9" width="5" height="5" style="stroke-width:1"/><path d="M10.500 11h1v1h-1z" style="stroke-width:.8"/></g>
<g transform="translate(0,21.700)"><path d="M5.500 1.500h7l4 4v11h-11zM12.500 1.500v4h4"/><rect x="8.500" y="9" width="5" height="5" style="stroke-width:1"/><path d="M10.500 11h1v1h-1z" style="stroke-width:.8"/></g><g transform="translate(0,43.400)"><path d="M5.500 1.500h7l4 4v11h-11zM12.500 1.500v4h4"/><rect x="8.500" y="9" width="5" height="5" style="stroke-width:1"/><path d="M10.500 11h1v1h-1z" style="stroke-width:.8"/></g><g transform="translate(0,65)"><path d="M5.500 1.500h7l4 4v11h-11zM12.500 1.500v4h4"/><rect x="8.500" y="9" width="5" height="5" style="stroke-width:1"/><path d="M10.500 11h1v1h-1z" style="stroke-width:.8"/></g></g></svg>
<span class="t" style="left:22.500px;top:216px;letter-spacing:-0.443px">A1.1.1 - 1ST FLOOR PLAN - SOUTH.pdf</span>
<span class="t" style="left:22.500px;top:237.700px;letter-spacing:-0.440px">A1.1.2 - 1ST FLOOR PLAN - NORTH.pdf</span>
<span class="t" style="left:22.500px;top:259.400px;letter-spacing:-0.440px">A1.2.1 - 2ND FLOOR PLAN - SOUTH.pdf</span>
<span class="t" style="left:22.500px;top:281px;letter-spacing:-0.437px">A1.2.2 - 2ND FLOOR PLAN - NORTH.pdf</span>
<!-- tabs -->
<div class="a" style="left:0;top:589.500px;width:431px;height:2px;background:#141516"></div>
<div class="a" style="left:0;top:592px;width:144px;height:19px;background:#185d91"></div>
<span class="t" style="left:55px;top:598.500px;font-size:10.300px;color:#cfe3f4;letter-spacing:-0.491px">Record</span>
<span class="t" style="left:186px;top:598.500px;font-size:10.300px;color:#e6e6e6;letter-spacing:0.017px">Notifications</span>
<span class="t" style="left:339px;top:598.500px;font-size:10.300px;color:#e6e6e6;letter-spacing:-0.216px">Pending</span>
<!-- records -->
<svg style="left:0;top:611px" width="40" height="120"><g class="ic" style="stroke-width:1.100">
<path d="M17.500 6a2 2 0 1 1 0 4a2 2 0 1 1 0-4zM14.500 16v-3.500c0-3 6-3 6 0v3.500l-1 .5v3h-4v-3z" transform="translate(0,-1.500)"/>
<g transform="translate(6,22.500)"><path d="M5.500 1.500h7l4 4v11h-11zM12.500 1.500v4h4"/><rect x="8.500" y="9" width="5" height="5" style="stroke-width:1"/><path d="M10.500 11h1v1h-1z" style="stroke-width:.8"/></g><g transform="translate(6,42.800)"><path d="M5.500 1.500h7l4 4v11h-11zM12.500 1.500v4h4"/><rect x="8.500" y="9" width="5" height="5" style="stroke-width:1"/><path d="M10.500 11h1v1h-1z" style="stroke-width:.8"/></g><g transform="translate(6,63.100)"><path d="M5.500 1.500h7l4 4v11h-11zM12.500 1.500v4h4"/><rect x="8.500" y="9" width="5" height="5" style="stroke-width:1"/><path d="M10.500 11h1v1h-1z" style="stroke-width:.8"/></g><g transform="translate(6,83.500)"><path d="M5.500 1.500h7l4 4v11h-11zM12.500 1.500v4h4"/><rect x="8.500" y="9" width="5" height="5" style="stroke-width:1"/><path d="M10.500 11h1v1h-1z" style="stroke-width:.8"/></g></g></svg>
<span class="t" style="left:2.500px;top:615px;font-size:7px;color:#cfcfcf">1</span><span class="t" style="left:2.500px;top:635px;font-size:7px;color:#cfcfcf">2</span><span class="t" style="left:2.500px;top:655.500px;font-size:7px;color:#cfcfcf">3</span><span class="t" style="left:2.500px;top:676px;font-size:7px;color:#cfcfcf">4</span><span class="t" style="left:2.500px;top:696px;font-size:7px;color:#cfcfcf">5</span>
<span class="t rn" style="top:617.8px;letter-spacing:-0.355px">Lilian Magallanes:</span><span class="t rm" style="top:618.3px;letter-spacing:-0.147px">Joined Session</span>
<span class="t rn" style="top:638.1px;letter-spacing:-0.355px">Lilian Magallanes:</span><span class="t rm" style="top:638.6px;letter-spacing:-0.408px">Added 'A1.2.1 - 2ND FLOOR PLAN - SOUTH.pdf'</span>
<span class="t rn" style="top:658.4px;letter-spacing:-0.355px">Lilian Magallanes:</span><span class="t rm" style="top:658.9px;letter-spacing:-0.411px">Added 'A1.1.1 - 1ST FLOOR PLAN - SOUTH.pdf'</span>
<span class="t rn" style="top:678.7px;letter-spacing:-0.355px">Lilian Magallanes:</span><span class="t rm" style="top:679.2px;letter-spacing:-0.405px">Added 'A1.2.2 - 2ND FLOOR PLAN - NORTH.pdf'</span>
<span class="t rn" style="top:699.0px;letter-spacing:-0.355px">Lilian Magallanes:</span><span class="t rm" style="top:699.5px;letter-spacing:-0.420px">Added 'A1.1.2 - 1ST FLOOR PLAN - NORTH.pdf'</span>
<!-- record scrollbar -->
<div class="a" style="left:423px;top:612px;width:7px;height:214px;background:#ececec"></div>
<svg style="left:423px;top:612px" width="7" height="214"><path d="M1.500 5l2-2.500l2 2.500zM1.500 209l2 2.500l2-2.500z" fill="#777"/></svg>
<!-- chat -->
<div class="a" style="left:0;top:830px;width:372px;height:19px;border:1px solid #3c3d3f"></div>
<span class="t" style="left:4px;top:835px;letter-spacing:-0.177px">Chat</span>
<svg style="left:378px;top:830px" width="50" height="20"><g class="ic" style="stroke-width:1.500"><path d="M7.500 5.500h8M7.500 10h8M7.500 14.500h8M3 5.500h1.500M3 10h1.500M3 14.500h1.500"/><path d="M32.500 5h10l-4 5v5l-2-1.500v-3.500z" style="stroke-width:1.200"/></g></svg>
</div>
<!-- RIGHT TOOLBAR -->
<div id="rtool" class="a">
<div class="a" style="left:0;top:0;width:29px;height:28px;background:#175d91"></div>
<div class="a" style="left:29px;top:-1px;width:28px;height:1px;background:#38393b"></div>
<div class="a" style="left:33px;top:284.500px;width:20px;height:1px;background:#3a3b3d"></div>
<svg style="left:0;top:0" width="57" height="853"><g class="ic" style="stroke-width:1.200">
<!-- active studio icon -->
<g style="stroke:#eaf2fa;stroke-width:1.300"><path d="M8.500 9.500l5-2.500h7.500v11c0 1.500-1 2.500-2.500 2.500h-7.500c-1.500 0-2.500-1-2.500-2.500z"/><path d="M11.500 13h4v5h-4z"/></g>
<!-- A text box y=64 -->
<rect x="35.500" y="10" width="14" height="14"/><path d="M39.500 21l3-8l3 8M40.500 18.500h4"/>
<!-- highlighter y=93 (yellow) -->
<g style="stroke:#d9b84c"><path d="M36 52.500l5.500-10l5.500 6.500zM41.500 42.500l2-3.500l5 5.500l-1.500 4M36 52.500h12"/></g>
<!-- pen y=121 (blue) -->
<g style="stroke:#3b8fd6;stroke-width:1.400"><path d="M48.500 66.500l-9 9l-3.500 1.500l1.500-3.500l9-9zM40 80c2-1.500 4-.5 6-1.500"/></g>
<!-- typewriter y=147 -->
<path d="M35.500 93.500h12v8h-12zM47.500 97.500h2.500v8M35 107.500c1.500-2 2.500 2 4 0s2.500 2 4 0s2.500 2 4 0s2 1.500 3 0"/>
<!-- cloud y=176 -->
<path d="M42.50 122.80A2.66 2.66 0 0 1 46.88 124.62A2.66 2.66 0 0 1 48.70 129.00A2.66 2.66 0 0 1 46.88 133.38A2.66 2.66 0 0 1 42.50 135.20A2.66 2.66 0 0 1 38.12 133.38A2.66 2.66 0 0 1 36.30 129.00A2.66 2.66 0 0 1 38.12 124.62A2.66 2.66 0 0 1 42.50 122.80Z"/>
<!-- callout y=203 -->
<path d="M35.500 150.500h12v6.500h-12zM47.500 153.500h3v6l-5.500 5.500M45 162v3h3"/>
<!-- image y=232 -->
<rect x="35.500" y="178.500" width="14" height="12"/><path d="M36 189l4.500-4.500l3 3l2-2l4 3.500"/><circle cx="45.500" cy="182" r="1.200"/>
<!-- dotted rect y=260 -->
<rect x="38.500" y="208.500" width="11" height="11" stroke-dasharray="2 1.500"/><path d="M34.500 208.500h5M37 206v5"/>
<!-- ellipse y=288 -->
<ellipse cx="42.500" cy="241" rx="7" ry="5"/>
<!-- circled A y=315 -->
<circle cx="42.500" cy="268.500" r="6.500"/><path d="M40 272l2.500-7l2.500 7M41 270h3" style="stroke-width:1.400"/>
<!-- line y=347 -->
<path d="M36 307l13-13"/>
<!-- arrow y=376 -->
<path d="M36 336l12-12M44 323.500h4.500v4.500z" fill="#d2d2d2"/>
<!-- arc y=404 -->
<path d="M36.500 364.500c0-7 5-12 12-12"/>
<!-- polyline y=432 -->
<path d="M36 392l2.500-6l3 2.500l2.500-6l2.500 3l3-3"/>
<!-- dimension y=460 -->
<path d="M36.500 409v8M49.500 409v8M36.500 413h13"/>
<!-- rect y=488 -->
<rect x="36" y="435.500" width="14" height="10.500"/>
<!-- ellipse y=516 -->
<ellipse cx="42.500" cy="469" rx="7" ry="5"/>
<!-- polygon y=544 -->
<path d="M36.500 490.500h11l-3.500 6l5.500 7h-13z"/>
<!-- purple group -->
<g style="stroke:#8a55c8;stroke-width:1" stroke-dasharray="1.500 1.500"><path d="M35.500 519v14M35.500 519h14"/><path d="M35.500 547v14M35.500 547h14"/><path d="M35.500 575v14M35.500 575h14"/><path d="M35.500 603v14M35.500 603h14"/></g>
<path d="M39 531.500l2-8.500l8-1.500v10z"/><g fill="#d2d2d2" stroke="none"><circle cx="39" cy="531.500" r="1.500"/><circle cx="41" cy="523" r="1.500"/><circle cx="49" cy="521.500" r="1.500"/><circle cx="49" cy="531.500" r="1.500"/></g>
<path d="M38.500 560.500v-5c0-4 3-6 7-6h4v11z"/>
<path d="M38.500 578v8M49.500 578v8M39.500 582h9M41.500 580l-2 2l2 2M46.500 580l2 2l-2 2" style="stroke-width:1.100"/>
<path d="M40 606v10M43 605.500v10M46 605v10M49 604.500v10M37.500 613l13-4.500" style="stroke-width:1.100"/>
</g></svg>
</div>
</body></html>
